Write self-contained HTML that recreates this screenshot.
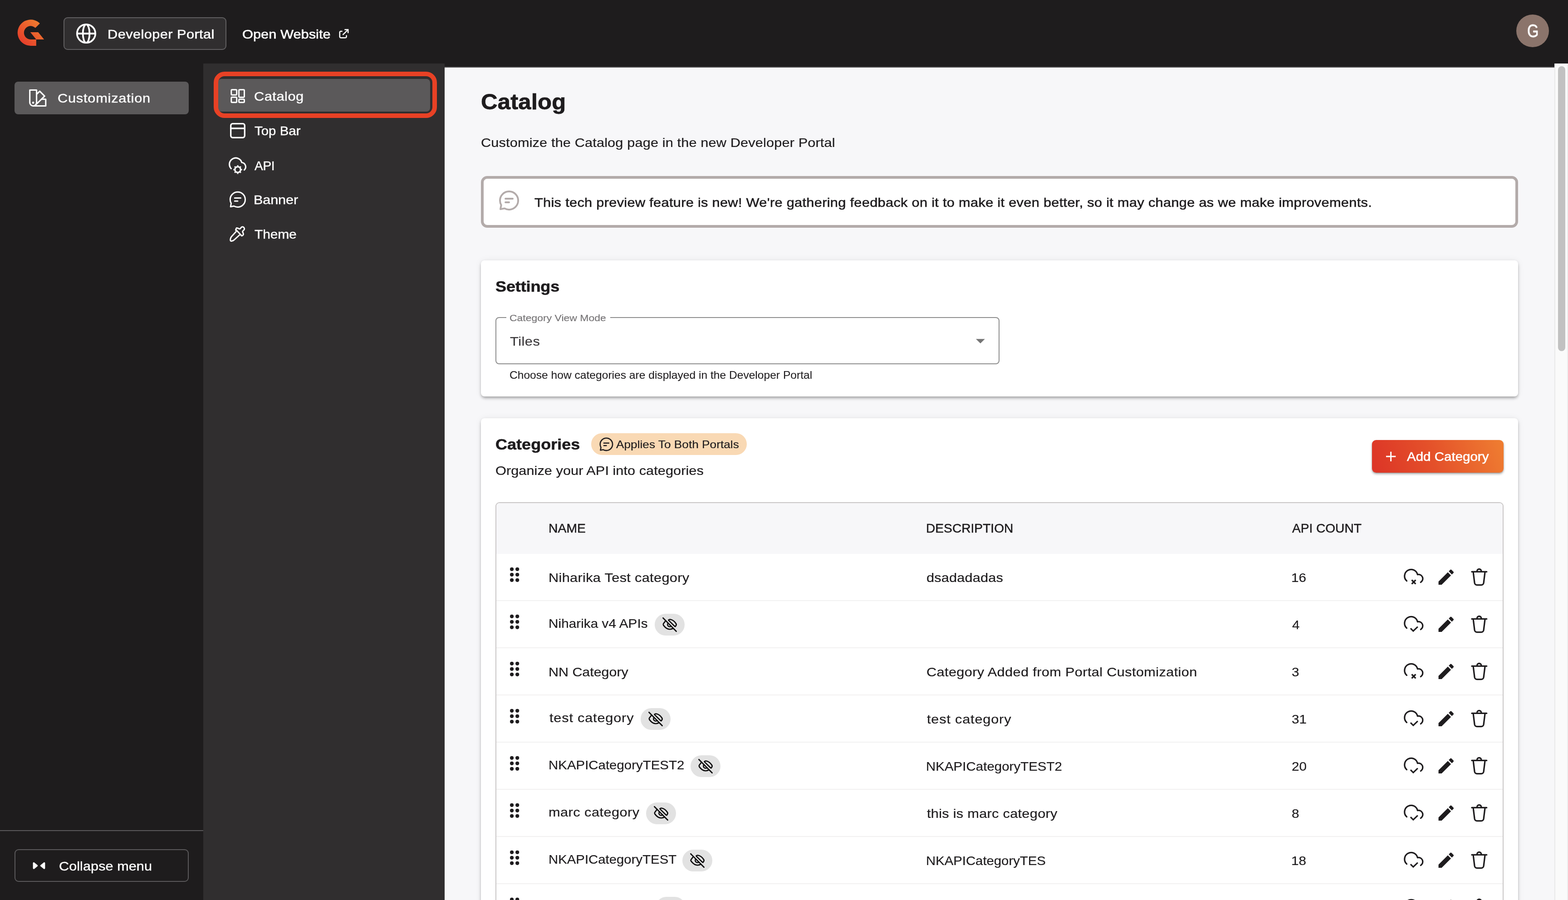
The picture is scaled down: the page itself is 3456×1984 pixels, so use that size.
<!DOCTYPE html>
<html lang="en">
<head>
<meta charset="utf-8">
<title>Catalog - Developer Portal Customization</title>
<style>
*{box-sizing:border-box;margin:0;padding:0}
html,body{width:3456px;height:1984px;overflow:hidden;background:#f7f7f9;font-family:"Liberation Sans", sans-serif;}
#app{position:relative;width:3456px;height:1984px;overflow:hidden;background:#f7f7f9;}
.abs,.t,svg{position:absolute}
.t{white-space:pre;display:block;transform-origin:0 0;font-weight:400;will-change:transform}
svg{overflow:visible}
header{position:absolute;left:0;top:0;width:3456px;height:149px;background:#1e1c1d;border-bottom:2px solid #545254;}
.side1{position:absolute;left:0;top:140px;width:448px;height:1844px;background:#1e1c1d;}
.side2{position:absolute;left:448px;top:140px;width:532px;height:1844px;background:#302e2f;}
.card{position:absolute;background:#fff;border-radius:8px;box-shadow:0 5px 7px -2px rgba(0,0,0,.30),0 2px 6px rgba(0,0,0,.10),0 0 16px rgba(0,0,0,.06);}
</style>
</head>
<body>
<div id="app">
<header>
<svg style="left:36px;top:40px" width="64" height="64" viewBox="36 40 64 64" ><defs><linearGradient id="lg" x1="45" y1="98" x2="92" y2="48" gradientUnits="userSpaceOnUse"><stop offset="0" stop-color="#e5392a"/><stop offset="1" stop-color="#ef8030"/></linearGradient></defs><path fill="url(#lg)" d="M87.85 51.65 A28.8 28.8 0 1 0 67.7 100.9 L79.8 100.9 L79.8 86.9 L67.7 86.9 A14.8 14.8 0 1 1 77.95 61.55 Z"/><path fill="url(#lg)" d="M66.8 71 L84.2 71 L97.2 86.9 L79.8 86.9 Z"/></svg>
<div class="abs" style="left:140px;top:38px;width:359px;height:72px;border:2px solid #605e60;border-radius:9px;background:#302e2f"></div>
<svg style="left:166px;top:50px" width="48" height="48" viewBox="166 50 48 48" ><circle cx="190" cy="74" r="20.2" fill="none" stroke="#fff" stroke-width="3.8" stroke-linecap="round" stroke-linejoin="round"/><ellipse cx="190" cy="74" rx="7.4" ry="20.2" fill="none" stroke="#fff" stroke-width="3.8" stroke-linecap="round" stroke-linejoin="round"/><path d="M170 74 H210" fill="none" stroke="#fff" stroke-width="3.8" stroke-linecap="round" stroke-linejoin="round"/></svg>
<span class="t" style="left:237.00px;top:61.80px;font-size:28px;line-height:28px;font-weight:400;color:#ffffff;letter-spacing:0.364px;transform:scaleX(1.1);-webkit-text-stroke:0.5px #ffffff;">Developer Portal</span>
<span class="t" style="left:534.00px;top:61.50px;font-size:28px;line-height:28px;font-weight:400;color:#ffffff;letter-spacing:0.000px;transform:scaleX(1.1);-webkit-text-stroke:0.6px #ffffff;">Open Website</span>
<svg style="left:746px;top:62px" width="24" height="24" viewBox="746 62 24 24" ><path d="M753.6 69 H751.3 A2.5 2.5 0 0 0 748.8 71.5 V80.8 A2.5 2.5 0 0 0 751.3 83.3 H761.1 A2.5 2.5 0 0 0 763.6 80.8 V78.5" fill="none" stroke="#fff" stroke-width="2.5" stroke-linecap="round" stroke-linejoin="round"/><path d="M756.2 76.2 L767.2 65.2 M760.4 65.2 H767.2 V72" fill="none" stroke="#fff" stroke-width="2.5" stroke-linecap="round" stroke-linejoin="round"/></svg>
<div class="abs" style="left:3342px;top:32px;width:72px;height:72px;border-radius:50%;background:#8b746b"></div>
<span class="t" style="left:3365.70px;top:48.09px;font-size:41px;line-height:41px;font-weight:400;color:#ffffff;letter-spacing:0.000px;transform:scaleX(0.8);-webkit-text-stroke:0.8px #ffffff;">G</span>
</header>
<nav class="side1">
<div class="abs" style="left:32px;top:40px;width:384px;height:72px;border-radius:8px;background:#5b595a"></div>
<div class="abs" style="left:0;top:1690px;width:448px;height:2px;background:#5a585a"></div>
<div class="abs" style="left:32px;top:1732px;width:384px;height:72px;border-radius:9px;border:2px solid #5a585a"></div>
</nav>
<svg style="left:62px;top:195px" width="42" height="42" viewBox="62 195 42 42" ><path d="M65.7 198.5 H80.6 V226 A7.45 7.45 0 0 1 65.7 226 Z" fill="none" stroke="#fff" stroke-width="3.1" stroke-linecap="round" stroke-linejoin="round"/><circle cx="73.1" cy="226.4" r="2.4" fill="#fff"/><path d="M80.9 207.5 L87.6 201.2 L98.3 211.8 L78.3 231.5" fill="none" stroke="#fff" stroke-width="3.1" stroke-linecap="round" stroke-linejoin="round"/><path d="M91.8 218.8 H100.8 V233.5 H73.5" fill="none" stroke="#fff" stroke-width="3.1" stroke-linecap="round" stroke-linejoin="round"/></svg>
<span class="t" style="left:127.00px;top:203.30px;font-size:28px;line-height:28px;font-weight:400;color:#ffffff;letter-spacing:0.682px;transform:scaleX(1.1);-webkit-text-stroke:0.4px #ffffff;">Customization</span>
<svg style="left:70px;top:1896px" width="32" height="24" viewBox="70 1896 32 24" ><path d="M74.4 1902.6 V1914 L81.4 1908.3 Z" fill="#fff" stroke="#fff" stroke-width="3.6" stroke-linejoin="round"/><path d="M97.6 1902.6 V1914 L90.6 1908.3 Z" fill="#fff" stroke="#fff" stroke-width="3.6" stroke-linejoin="round"/></svg>
<span class="t" style="left:129.50px;top:1895.60px;font-size:28px;line-height:28px;font-weight:400;color:#ffffff;letter-spacing:0.038px;transform:scaleX(1.0946);-webkit-text-stroke:0.4px #ffffff;">Collapse menu</span>
<nav class="side2">
<div class="abs" style="left:32px;top:34px;width:468px;height:72px;border-radius:8px;background:#5b595a"></div>
<div class="abs" style="left:23px;top:18px;width:492px;height:102px;border-radius:24px;border:10px solid #e84125"></div>
</nav>
<svg style="left:506px;top:194px" width="36" height="36" viewBox="506 194 36 36" ><rect x="509.8" y="197.8" width="11.9" height="11.4" rx="1.8" fill="none" stroke="#fff" stroke-width="3.0" stroke-linecap="round" stroke-linejoin="round"/><rect x="526.6" y="197.8" width="11.9" height="16.6" rx="1.8" fill="none" stroke="#fff" stroke-width="3.0" stroke-linecap="round" stroke-linejoin="round"/><rect x="509.8" y="214.3" width="11.9" height="11.4" rx="1.8" fill="none" stroke="#fff" stroke-width="3.0" stroke-linecap="round" stroke-linejoin="round"/><rect x="526.6" y="218.7" width="11.9" height="7" rx="1.8" fill="none" stroke="#fff" stroke-width="3.0" stroke-linecap="round" stroke-linejoin="round"/></svg>
<svg style="left:505px;top:269px" width="38" height="38" viewBox="505 269 38 38" ><rect x="508.7" y="272.7" width="30.6" height="30.6" rx="4" fill="none" stroke="#fff" stroke-width="3.3" stroke-linecap="round" stroke-linejoin="round"/><path d="M508.7 283 H539.3" fill="none" stroke="#fff" stroke-width="3.3" stroke-linecap="round" stroke-linejoin="round"/></svg>
<svg style="left:500px;top:343px" width="48" height="44" viewBox="500 343 48 44" ><path d="M509.4 371.6 A13.9 13.9 0 1 1 532.9 358.2 A9.5 9.5 0 0 1 538.4 374.6" fill="none" stroke="#fff" stroke-width="3.1" stroke-linecap="round" stroke-linejoin="round"/><path d="M531.60 373.90 L533.70 373.90 M529.37 379.27 L530.86 380.76 M524.00 381.50 L524.00 383.60 M518.63 379.27 L517.14 380.76 M516.40 373.90 L514.30 373.90 M518.63 368.53 L517.14 367.04 M524.00 366.30 L524.00 364.20 M529.37 368.53 L530.86 367.04 " fill="none" stroke="#fff" stroke-width="3.0" stroke-linecap="butt"/><circle cx="524" cy="373.9" r="6.3" fill="none" stroke="#fff" stroke-width="3.3"/></svg>
<svg style="left:502.18px;top:417.88px" width="43.84" height="43.84" viewBox="502.18 417.88 43.84 43.84" ><path d="M524.10 456.40 C533.27 456.40 540.70 448.97 540.70 439.80 C540.70 430.63 533.27 423.20 524.10 423.20 C514.93 423.20 507.50 430.63 507.50 439.80 C507.50 442.82 508.31 445.66 509.72 448.10 L508.33 455.57 L515.80 454.18 C518.24 455.59 521.08 456.40 524.10 456.40 Z" fill="none" stroke="#fff" stroke-width="3.0" stroke-linecap="round" stroke-linejoin="round"/><path d="M517.46 436.48 L530.74 436.48 M517.46 443.12 L524.10 443.12" fill="none" stroke="#fff" stroke-width="3.0" stroke-linecap="round" stroke-linejoin="round"/></svg>
<svg style="left:502px;top:494px" width="44" height="44" viewBox="502 494 44 44" ><path d="M520.3 510.5 L509.9 522 C508.4 523.8 507.3 528 507.9 530.3 C508.1 530.9 508.6 531.4 509.3 531.5 C511.8 531.8 514.8 530.2 516.6 528.4 L527.7 518.3" fill="none" stroke="#fff" stroke-width="2.9" stroke-linecap="round" stroke-linejoin="round"/><path d="M519.50 507.40 C519.80 506.60 520.17 503.18 521.30 502.60 C522.43 502.02 525.02 503.58 526.30 503.90 C527.58 504.22 528.00 505.02 529.00 504.50 C530.00 503.98 531.20 501.52 532.30 500.80 C533.40 500.08 534.58 499.83 535.60 500.20 C536.62 500.57 537.97 502.02 538.40 503.00 C538.83 503.98 538.82 504.90 538.20 506.10 C537.58 507.30 535.13 509.03 534.70 510.20 C534.27 511.37 535.32 511.97 535.60 513.10 C535.88 514.23 536.82 515.87 536.40 517.00 C535.98 518.13 533.97 519.62 533.10 519.90 C532.23 520.18 531.52 518.90 531.20 518.70 " fill="none" stroke="#fff" stroke-width="2.9" stroke-linecap="round" stroke-linejoin="round"/><path d="M520.2 506.6 L532 518.9" fill="none" stroke="#fff" stroke-width="2.9" stroke-linecap="round" stroke-linejoin="round"/></svg>
<span class="t" style="left:559.50px;top:199.10px;font-size:28px;line-height:28px;font-weight:400;color:#ffffff;letter-spacing:0.455px;transform:scaleX(1.1);-webkit-text-stroke:0.4px #ffffff;">Catalog</span>
<span class="t" style="left:560.50px;top:275.10px;font-size:28px;line-height:28px;font-weight:400;color:#ffffff;letter-spacing:0.080px;transform:scaleX(1.0464);-webkit-text-stroke:0.4px #ffffff;">Top Bar</span>
<span class="t" style="left:560.50px;top:351.50px;font-size:28px;line-height:28px;font-weight:400;color:#ffffff;letter-spacing:-0.300px;-webkit-text-stroke:0.4px #ffffff;">API</span>
<span class="t" style="left:558.50px;top:427.30px;font-size:28px;line-height:28px;font-weight:400;color:#ffffff;letter-spacing:-0.128px;transform:scaleX(1.0943);-webkit-text-stroke:0.4px #ffffff;">Banner</span>
<span class="t" style="left:560.50px;top:503.10px;font-size:28px;line-height:28px;font-weight:400;color:#ffffff;letter-spacing:-0.163px;transform:scaleX(1.0733);-webkit-text-stroke:0.4px #ffffff;">Theme</span>
<main>
<h1 class="t" style="left:1060.20px;top:201.07px;font-size:48px;line-height:48px;font-weight:700;color:#1e1c1e;letter-spacing:0.158px;transform:scaleX(1.0578);-webkit-text-stroke:0.8px #1e1c1e;">Catalog</h1>
<p class="t" style="left:1059.50px;top:301.30px;font-size:28px;line-height:28px;font-weight:400;color:#1e1c1e;letter-spacing:0.086px;transform:scaleX(1.1);-webkit-text-stroke:0.2px #1e1c1e;">Customize the Catalog page in the new Developer Portal</p>
<div class="abs" style="left:1060px;top:388px;width:2286px;height:114px;border:6px solid #b3abaa;border-radius:14px;background:#fff"></div>
<svg style="left:1095.84px;top:415.84px" width="52.12" height="52.12" viewBox="1095.84 415.84 52.12 52.12" ><path d="M1121.90 461.95 C1132.97 461.95 1141.95 452.97 1141.95 441.90 C1141.95 430.83 1132.97 421.85 1121.90 421.85 C1110.83 421.85 1101.85 430.83 1101.85 441.90 C1101.85 445.55 1102.83 448.98 1104.53 451.92 L1102.85 460.95 L1111.88 459.27 C1114.82 460.97 1118.25 461.95 1121.90 461.95 Z" fill="none" stroke="#b3abaa" stroke-width="3.9" stroke-linecap="round" stroke-linejoin="round"/><path d="M1113.88 437.89 L1129.92 437.89 M1113.88 445.91 L1121.90 445.91" fill="none" stroke="#b3abaa" stroke-width="3.9" stroke-linecap="round" stroke-linejoin="round"/></svg>
<p class="t" style="left:1178.00px;top:432.55px;font-size:28px;line-height:28px;font-weight:400;color:#1e1c1e;letter-spacing:0.254px;transform:scaleX(1.1);-webkit-text-stroke:0.55px #1e1c1e;">This tech preview feature is new! We're gathering feedback on it to make it even better, so it may change as we make improvements.</p>
<section class="card" style="left:1060px;top:574px;width:2286px;height:300px"></section>
<h2 class="t" style="left:1091.50px;top:614.64px;font-size:33.5px;line-height:33.5px;font-weight:700;color:#1e1c1e;letter-spacing:-0.133px;transform:scaleX(1.0769);-webkit-text-stroke:0.6px #1e1c1e;">Settings</h2>
<div class="abs" style="left:1092px;top:699px;width:1111px;height:104px;border:2px solid #8e8e8e;border-radius:8px"></div>
<div class="abs" style="left:1116px;top:696px;width:229px;height:8px;background:#fff"></div>
<label class="t" style="left:1123.00px;top:690.22px;font-size:21px;line-height:21px;font-weight:400;color:#777577;letter-spacing:0.000px;transform:scaleX(1.0933);-webkit-text-stroke:0.2px #777577;">Category View Mode</label>
<span class="t" style="left:1124.00px;top:739.00px;font-size:28px;line-height:28px;font-weight:400;color:#3b393b;letter-spacing:0.455px;transform:scaleX(1.1);-webkit-text-stroke:0.2px #3b393b;">Tiles</span>
<svg style="left:2148px;top:744px" width="26" height="16" viewBox="2148 744 26 16" ><path d="M2151 747.2 H2170.8 L2160.9 757 Z" fill="#757575"/></svg>
<p class="t" style="left:1123.00px;top:815.18px;font-size:24px;line-height:24px;font-weight:400;color:#1e1c1e;letter-spacing:0.000px;transform:scaleX(1.0247);-webkit-text-stroke:0.1px #1e1c1e;">Choose how categories are displayed in the Developer Portal</p>
<section class="card" style="left:1060px;top:922px;width:2286px;height:1200px"></section>
<h2 class="t" style="left:1091.50px;top:962.64px;font-size:33.5px;line-height:33.5px;font-weight:700;color:#1e1c1e;letter-spacing:0.000px;transform:scaleX(1.076);-webkit-text-stroke:0.6px #1e1c1e;">Categories</h2>
<div class="abs" style="left:1303px;top:955px;width:343px;height:48px;border-radius:24px;background:#f9d9b4"></div>
<svg style="left:1317.56px;top:960.56px" width="36.88" height="36.88" viewBox="1317.56 960.56 36.88 36.88" ><path d="M1336.00 992.70 C1343.57 992.70 1349.70 986.57 1349.70 979.00 C1349.70 971.43 1343.57 965.30 1336.00 965.30 C1328.43 965.30 1322.30 971.43 1322.30 979.00 C1322.30 981.50 1322.97 983.83 1324.13 985.85 L1322.98 992.01 L1329.15 990.87 C1331.17 992.03 1333.50 992.70 1336.00 992.70 Z" fill="none" stroke="#1e1c1e" stroke-width="2.6" stroke-linecap="round" stroke-linejoin="round"/><path d="M1330.52 976.26 L1341.48 976.26 M1330.52 981.74 L1336.00 981.74" fill="none" stroke="#1e1c1e" stroke-width="2.6" stroke-linecap="round" stroke-linejoin="round"/></svg>
<span class="t" style="left:1358.00px;top:967.68px;font-size:24px;line-height:24px;font-weight:400;color:#1e1c1e;letter-spacing:0.000px;transform:scaleX(1.0931);-webkit-text-stroke:0.2px #1e1c1e;">Applies To Both Portals</span>
<p class="t" style="left:1091.50px;top:1024.30px;font-size:28px;line-height:28px;font-weight:400;color:#1e1c1e;letter-spacing:0.000px;transform:scaleX(1.1);-webkit-text-stroke:0.2px #1e1c1e;">Organize your API into categories</p>
<div class="abs" style="left:3024px;top:970px;width:290px;height:72px;border-radius:9px;background:linear-gradient(70deg,#dc3427 0%,#e4502a 45%,#ef7e31 100%);box-shadow:0 3px 5px rgba(0,0,0,.3),0 1px 2px rgba(0,0,0,.2)"></div>
<svg style="left:3052px;top:993px" width="28" height="28" viewBox="3052 993 28 28" ><path d="M3055 1006.3 H3076.3 M3065.65 995.7 V1017" fill="none" stroke="#fff" stroke-width="3.0" stroke-linecap="butt" stroke-linejoin="round"/></svg>
<span class="t" style="left:3100.60px;top:993.94px;font-size:27px;line-height:27px;font-weight:400;color:#ffffff;letter-spacing:0.058px;transform:scaleX(1.0886);-webkit-text-stroke:0.6px #ffffff;">Add Category</span>
<div class="abs" style="left:1092px;top:1107px;width:2222px;height:1000px;border:2px solid #c9c6c6;border-radius:9px;background:#fff;overflow:hidden">
<div class="abs" style="left:0;top:0;width:2222px;height:112px;background:#f7f7f9"></div>
<div class="abs" style="left:0;top:214px;width:2222px;height:2px;background:#f2f1f1"></div>
<div class="abs" style="left:0;top:318px;width:2222px;height:2px;background:#f2f1f1"></div>
<div class="abs" style="left:0;top:422px;width:2222px;height:2px;background:#f2f1f1"></div>
<div class="abs" style="left:0;top:526px;width:2222px;height:2px;background:#f2f1f1"></div>
<div class="abs" style="left:0;top:630px;width:2222px;height:2px;background:#f2f1f1"></div>
<div class="abs" style="left:0;top:734px;width:2222px;height:2px;background:#f2f1f1"></div>
<div class="abs" style="left:0;top:838px;width:2222px;height:2px;background:#f2f1f1"></div>
<div class="abs" style="left:0;top:942px;width:2222px;height:2px;background:#f2f1f1"></div>
</div>
<span class="t" style="left:1208.75px;top:1151.30px;font-size:28px;line-height:28px;font-weight:400;color:#1e1c1e;letter-spacing:0.000px;transform:scaleX(1.0128);-webkit-text-stroke:0.5px #1e1c1e;">NAME</span>
<span class="t" style="left:2041.00px;top:1151.30px;font-size:28px;line-height:28px;font-weight:400;color:#1e1c1e;letter-spacing:0.000px;transform:scaleX(1.0053);-webkit-text-stroke:0.5px #1e1c1e;">DESCRIPTION</span>
<span class="t" style="left:2848.00px;top:1151.30px;font-size:28px;line-height:28px;font-weight:400;color:#1e1c1e;letter-spacing:-0.037px;transform:scaleX(1.0046);-webkit-text-stroke:0.5px #1e1c1e;">API COUNT</span>
<svg style="left:1122px;top:1249px" width="24" height="36" viewBox="1122 1249 24 36" ><circle cx="1128.1" cy="1254.8" r="4.1" fill="#1e1c1e"/><circle cx="1128.1" cy="1266.8" r="4.1" fill="#1e1c1e"/><circle cx="1128.1" cy="1278.8" r="4.1" fill="#1e1c1e"/><circle cx="1140.2" cy="1254.8" r="4.1" fill="#1e1c1e"/><circle cx="1140.2" cy="1266.8" r="4.1" fill="#1e1c1e"/><circle cx="1140.2" cy="1278.8" r="4.1" fill="#1e1c1e"/></svg>
<span class="t" style="left:1209.00px;top:1260.10px;font-size:28px;line-height:28px;font-weight:400;color:#1e1c1e;letter-spacing:0.260px;transform:scaleX(1.1);-webkit-text-stroke:0.2px #1e1c1e;">Niharika Test category</span>
<span class="t" style="left:2042.00px;top:1260.10px;font-size:28px;line-height:28px;font-weight:400;color:#1e1c1e;letter-spacing:0.101px;transform:scaleX(1.1);-webkit-text-stroke:0.2px #1e1c1e;">dsadadadas</span>
<span class="t" style="left:2846.00px;top:1260.10px;font-size:28px;line-height:28px;font-weight:400;color:#1e1c1e;letter-spacing:0.000px;transform:scaleX(1.06);-webkit-text-stroke:0.2px #1e1c1e;">16</span>
<svg style="left:3092px;top:1251px" width="48" height="44" viewBox="3092 1251 48 44" ><path d="M3100.5 1280.6 A14.5 14.5 0 1 1 3124.4 1266.6 A9.3 9.3 0 0 1 3131.4 1283.6" fill="none" stroke="#1e1c1e" stroke-width="3.3" stroke-linecap="round" stroke-linejoin="round"/><path d="M3111.5 1278.5 L3120.3 1287.3000000000002 M3120.3 1278.5 L3111.5 1287.3000000000002" fill="none" stroke="#1e1c1e" stroke-width="3.3" stroke-linecap="butt" stroke-linejoin="round"/></svg>
<svg style="left:3165.4px;top:1249.6px" width="44.64" height="44.64" viewBox="0 0 24 24"><path d="M3 17.25V21h3.75L17.81 9.94l-3.75-3.75L3 17.25zM20.71 7.04c.39-.39.39-1.02 0-1.41l-2.34-2.34c-.39-.39-1.02-.39-1.41 0l-1.83 1.83 3.75 3.75 1.83-1.83z" fill="#1e1c1e"/></svg>
<svg style="left:3240px;top:1249px" width="42" height="46" viewBox="3240 1249 42 46" ><path d="M3244 1260.4 H3276.7" fill="none" stroke="#1e1c1e" stroke-width="3.3" stroke-linecap="round" stroke-linejoin="round"/><path d="M3255.6 1260 V1258.6 A4.6 4.1 0 0 1 3264.8 1258.6 V1260" fill="none" stroke="#1e1c1e" stroke-width="3.3" stroke-linecap="round" stroke-linejoin="round"/><path d="M3247.2 1261.5 L3250 1284.3 A5.6 5.6 0 0 0 3255.6 1289.7 H3264.6 A5.6 5.6 0 0 0 3270.2 1284.3 L3273 1261.5" fill="none" stroke="#1e1c1e" stroke-width="3.3" stroke-linecap="round" stroke-linejoin="round"/></svg>
<svg style="left:1122px;top:1353px" width="24" height="36" viewBox="1122 1353 24 36" ><circle cx="1128.1" cy="1358.8" r="4.1" fill="#1e1c1e"/><circle cx="1128.1" cy="1370.8" r="4.1" fill="#1e1c1e"/><circle cx="1128.1" cy="1382.8" r="4.1" fill="#1e1c1e"/><circle cx="1140.2" cy="1358.8" r="4.1" fill="#1e1c1e"/><circle cx="1140.2" cy="1370.8" r="4.1" fill="#1e1c1e"/><circle cx="1140.2" cy="1382.8" r="4.1" fill="#1e1c1e"/></svg>
<span class="t" style="left:1209.00px;top:1360.90px;font-size:28px;line-height:28px;font-weight:400;color:#1e1c1e;letter-spacing:0.031px;transform:scaleX(1.0616);-webkit-text-stroke:0.2px #1e1c1e;">Niharika v4 APIs</span>
<div class="abs" style="left:1443px;top:1353px;width:66px;height:48px;border-radius:24px;background:#e2e2e2"></div>
<svg style="left:1458px;top:1359px" width="36" height="36" viewBox="1458 1359 36 36" ><path d="M1470.40 1368.40 L1486.40 1384.40" fill="none" stroke="#f4f4f4" stroke-width="1.3"/><path d="M1473.60 1366.60 C1474.50 1365.70 1476.00 1365.40 1477.00 1365.50 C1482.00 1366.00 1486.60 1369.50 1490.00 1374.80 C1490.90 1376.30 1490.70 1378.00 1489.80 1379.20 L1488.90 1380.50 C1488.60 1381.40 1487.80 1381.40 1487.20 1380.80 L1473.60 1367.40 C1473.30 1367.10 1473.30 1366.90 1473.60 1366.60 Z" fill="none" stroke="#0c0b0c" stroke-width="2.65" stroke-linecap="round" stroke-linejoin="round"/><path d="M1467.20 1368.20 L1462.30 1374.80 C1461.40 1376.00 1461.40 1377.00 1462.20 1378.10 C1465.50 1382.80 1470.50 1387.20 1476.30 1387.20 C1479.40 1387.20 1481.80 1386.20 1484.00 1385.00" fill="none" stroke="#0c0b0c" stroke-width="2.65" stroke-linecap="round" stroke-linejoin="round"/><path d="M1472.50 1373.50 A4.9 4.9 0 0 0 1479.40 1380.40" fill="none" stroke="#0c0b0c" stroke-width="2.65" stroke-linecap="round" stroke-linejoin="round"/><path d="M1461.40 1362.20 L1490.60 1391.75" fill="none" stroke="#0c0b0c" stroke-width="2.65" stroke-linecap="round" stroke-linejoin="round"/></svg>
<span class="t" style="left:2848.00px;top:1364.10px;font-size:28px;line-height:28px;font-weight:400;color:#1e1c1e;letter-spacing:0.000px;transform:scaleX(1.06);-webkit-text-stroke:0.2px #1e1c1e;">4</span>
<svg style="left:3092px;top:1355px" width="48" height="44" viewBox="3092 1355 48 44" ><path d="M3100.5 1384.6 A14.5 14.5 0 1 1 3124.4 1370.6 A9.3 9.3 0 0 1 3131.4 1387.6" fill="none" stroke="#1e1c1e" stroke-width="3.3" stroke-linecap="round" stroke-linejoin="round"/><path d="M3108.9 1385.2 L3114.9 1391.1 L3124.8 1381.6" fill="none" stroke="#1e1c1e" stroke-width="3.2" stroke-linecap="butt" stroke-linejoin="miter"/></svg>
<svg style="left:3165.4px;top:1353.6px" width="44.64" height="44.64" viewBox="0 0 24 24"><path d="M3 17.25V21h3.75L17.81 9.94l-3.75-3.75L3 17.25zM20.71 7.04c.39-.39.39-1.02 0-1.41l-2.34-2.34c-.39-.39-1.02-.39-1.41 0l-1.83 1.83 3.75 3.75 1.83-1.83z" fill="#1e1c1e"/></svg>
<svg style="left:3240px;top:1353px" width="42" height="46" viewBox="3240 1353 42 46" ><path d="M3244 1364.4 H3276.7" fill="none" stroke="#1e1c1e" stroke-width="3.3" stroke-linecap="round" stroke-linejoin="round"/><path d="M3255.6 1364 V1362.6 A4.6 4.1 0 0 1 3264.8 1362.6 V1364" fill="none" stroke="#1e1c1e" stroke-width="3.3" stroke-linecap="round" stroke-linejoin="round"/><path d="M3247.2 1365.5 L3250 1388.3 A5.6 5.6 0 0 0 3255.6 1393.7 H3264.6 A5.6 5.6 0 0 0 3270.2 1388.3 L3273 1365.5" fill="none" stroke="#1e1c1e" stroke-width="3.3" stroke-linecap="round" stroke-linejoin="round"/></svg>
<svg style="left:1122px;top:1457px" width="24" height="36" viewBox="1122 1457 24 36" ><circle cx="1128.1" cy="1462.8" r="4.1" fill="#1e1c1e"/><circle cx="1128.1" cy="1474.8" r="4.1" fill="#1e1c1e"/><circle cx="1128.1" cy="1486.8" r="4.1" fill="#1e1c1e"/><circle cx="1140.2" cy="1462.8" r="4.1" fill="#1e1c1e"/><circle cx="1140.2" cy="1474.8" r="4.1" fill="#1e1c1e"/><circle cx="1140.2" cy="1486.8" r="4.1" fill="#1e1c1e"/></svg>
<span class="t" style="left:1209.00px;top:1468.10px;font-size:28px;line-height:28px;font-weight:400;color:#1e1c1e;letter-spacing:-0.055px;transform:scaleX(1.09);-webkit-text-stroke:0.2px #1e1c1e;">NN Category</span>
<span class="t" style="left:2042.00px;top:1468.10px;font-size:28px;line-height:28px;font-weight:400;color:#1e1c1e;letter-spacing:0.291px;transform:scaleX(1.1);-webkit-text-stroke:0.2px #1e1c1e;">Category Added from Portal Customization</span>
<span class="t" style="left:2847.00px;top:1468.10px;font-size:28px;line-height:28px;font-weight:400;color:#1e1c1e;letter-spacing:0.000px;transform:scaleX(1.06);-webkit-text-stroke:0.2px #1e1c1e;">3</span>
<svg style="left:3092px;top:1459px" width="48" height="44" viewBox="3092 1459 48 44" ><path d="M3100.5 1488.6 A14.5 14.5 0 1 1 3124.4 1474.6 A9.3 9.3 0 0 1 3131.4 1491.6" fill="none" stroke="#1e1c1e" stroke-width="3.3" stroke-linecap="round" stroke-linejoin="round"/><path d="M3111.5 1486.5 L3120.3 1495.3000000000002 M3120.3 1486.5 L3111.5 1495.3000000000002" fill="none" stroke="#1e1c1e" stroke-width="3.3" stroke-linecap="butt" stroke-linejoin="round"/></svg>
<svg style="left:3165.4px;top:1457.6px" width="44.64" height="44.64" viewBox="0 0 24 24"><path d="M3 17.25V21h3.75L17.81 9.94l-3.75-3.75L3 17.25zM20.71 7.04c.39-.39.39-1.02 0-1.41l-2.34-2.34c-.39-.39-1.02-.39-1.41 0l-1.83 1.83 3.75 3.75 1.83-1.83z" fill="#1e1c1e"/></svg>
<svg style="left:3240px;top:1457px" width="42" height="46" viewBox="3240 1457 42 46" ><path d="M3244 1468.4 H3276.7" fill="none" stroke="#1e1c1e" stroke-width="3.3" stroke-linecap="round" stroke-linejoin="round"/><path d="M3255.6 1468 V1466.6 A4.6 4.1 0 0 1 3264.8 1466.6 V1468" fill="none" stroke="#1e1c1e" stroke-width="3.3" stroke-linecap="round" stroke-linejoin="round"/><path d="M3247.2 1469.5 L3250 1492.3 A5.6 5.6 0 0 0 3255.6 1497.7 H3264.6 A5.6 5.6 0 0 0 3270.2 1492.3 L3273 1469.5" fill="none" stroke="#1e1c1e" stroke-width="3.3" stroke-linecap="round" stroke-linejoin="round"/></svg>
<svg style="left:1122px;top:1561px" width="24" height="36" viewBox="1122 1561 24 36" ><circle cx="1128.1" cy="1566.8" r="4.1" fill="#1e1c1e"/><circle cx="1128.1" cy="1578.8" r="4.1" fill="#1e1c1e"/><circle cx="1128.1" cy="1590.8" r="4.1" fill="#1e1c1e"/><circle cx="1140.2" cy="1566.8" r="4.1" fill="#1e1c1e"/><circle cx="1140.2" cy="1578.8" r="4.1" fill="#1e1c1e"/><circle cx="1140.2" cy="1590.8" r="4.1" fill="#1e1c1e"/></svg>
<span class="t" style="left:1211.00px;top:1568.90px;font-size:28px;line-height:28px;font-weight:400;color:#1e1c1e;letter-spacing:0.697px;transform:scaleX(1.1);-webkit-text-stroke:0.2px #1e1c1e;">test category</span>
<div class="abs" style="left:1411.6px;top:1561px;width:66px;height:48px;border-radius:24px;background:#e2e2e2"></div>
<svg style="left:1426.6px;top:1567px" width="36" height="36" viewBox="1426.6 1567 36 36" ><path d="M1439.00 1576.40 L1455.00 1592.40" fill="none" stroke="#f4f4f4" stroke-width="1.3"/><path d="M1442.20 1574.60 C1443.10 1573.70 1444.60 1573.40 1445.60 1573.50 C1450.60 1574.00 1455.20 1577.50 1458.60 1582.80 C1459.50 1584.30 1459.30 1586.00 1458.40 1587.20 L1457.50 1588.50 C1457.20 1589.40 1456.40 1589.40 1455.80 1588.80 L1442.20 1575.40 C1441.90 1575.10 1441.90 1574.90 1442.20 1574.60 Z" fill="none" stroke="#0c0b0c" stroke-width="2.65" stroke-linecap="round" stroke-linejoin="round"/><path d="M1435.80 1576.20 L1430.90 1582.80 C1430.00 1584.00 1430.00 1585.00 1430.80 1586.10 C1434.10 1590.80 1439.10 1595.20 1444.90 1595.20 C1448.00 1595.20 1450.40 1594.20 1452.60 1593.00" fill="none" stroke="#0c0b0c" stroke-width="2.65" stroke-linecap="round" stroke-linejoin="round"/><path d="M1441.10 1581.50 A4.9 4.9 0 0 0 1448.00 1588.40" fill="none" stroke="#0c0b0c" stroke-width="2.65" stroke-linecap="round" stroke-linejoin="round"/><path d="M1430.00 1570.20 L1459.20 1599.75" fill="none" stroke="#0c0b0c" stroke-width="2.65" stroke-linecap="round" stroke-linejoin="round"/></svg>
<span class="t" style="left:2043.00px;top:1572.10px;font-size:28px;line-height:28px;font-weight:400;color:#1e1c1e;letter-spacing:0.697px;transform:scaleX(1.1);-webkit-text-stroke:0.2px #1e1c1e;">test category</span>
<span class="t" style="left:2847.00px;top:1572.10px;font-size:28px;line-height:28px;font-weight:400;color:#1e1c1e;letter-spacing:0.000px;transform:scaleX(1.06);-webkit-text-stroke:0.2px #1e1c1e;">31</span>
<svg style="left:3092px;top:1563px" width="48" height="44" viewBox="3092 1563 48 44" ><path d="M3100.5 1592.6 A14.5 14.5 0 1 1 3124.4 1578.6 A9.3 9.3 0 0 1 3131.4 1595.6" fill="none" stroke="#1e1c1e" stroke-width="3.3" stroke-linecap="round" stroke-linejoin="round"/><path d="M3108.9 1593.2 L3114.9 1599.1 L3124.8 1589.6" fill="none" stroke="#1e1c1e" stroke-width="3.2" stroke-linecap="butt" stroke-linejoin="miter"/></svg>
<svg style="left:3165.4px;top:1561.6px" width="44.64" height="44.64" viewBox="0 0 24 24"><path d="M3 17.25V21h3.75L17.81 9.94l-3.75-3.75L3 17.25zM20.71 7.04c.39-.39.39-1.02 0-1.41l-2.34-2.34c-.39-.39-1.02-.39-1.41 0l-1.83 1.83 3.75 3.75 1.83-1.83z" fill="#1e1c1e"/></svg>
<svg style="left:3240px;top:1561px" width="42" height="46" viewBox="3240 1561 42 46" ><path d="M3244 1572.4 H3276.7" fill="none" stroke="#1e1c1e" stroke-width="3.3" stroke-linecap="round" stroke-linejoin="round"/><path d="M3255.6 1572 V1570.6 A4.6 4.1 0 0 1 3264.8 1570.6 V1572" fill="none" stroke="#1e1c1e" stroke-width="3.3" stroke-linecap="round" stroke-linejoin="round"/><path d="M3247.2 1573.5 L3250 1596.3 A5.6 5.6 0 0 0 3255.6 1601.7 H3264.6 A5.6 5.6 0 0 0 3270.2 1596.3 L3273 1573.5" fill="none" stroke="#1e1c1e" stroke-width="3.3" stroke-linecap="round" stroke-linejoin="round"/></svg>
<svg style="left:1122px;top:1665px" width="24" height="36" viewBox="1122 1665 24 36" ><circle cx="1128.1" cy="1670.8" r="4.1" fill="#1e1c1e"/><circle cx="1128.1" cy="1682.8" r="4.1" fill="#1e1c1e"/><circle cx="1128.1" cy="1694.8" r="4.1" fill="#1e1c1e"/><circle cx="1140.2" cy="1670.8" r="4.1" fill="#1e1c1e"/><circle cx="1140.2" cy="1682.8" r="4.1" fill="#1e1c1e"/><circle cx="1140.2" cy="1694.8" r="4.1" fill="#1e1c1e"/></svg>
<span class="t" style="left:1209.00px;top:1672.90px;font-size:28px;line-height:28px;font-weight:400;color:#1e1c1e;letter-spacing:-0.017px;transform:scaleX(1.0521);-webkit-text-stroke:0.2px #1e1c1e;">NKAPICategoryTEST2</span>
<div class="abs" style="left:1522px;top:1665px;width:66px;height:48px;border-radius:24px;background:#e2e2e2"></div>
<svg style="left:1537px;top:1671px" width="36" height="36" viewBox="1537 1671 36 36" ><path d="M1549.40 1680.40 L1565.40 1696.40" fill="none" stroke="#f4f4f4" stroke-width="1.3"/><path d="M1552.60 1678.60 C1553.50 1677.70 1555.00 1677.40 1556.00 1677.50 C1561.00 1678.00 1565.60 1681.50 1569.00 1686.80 C1569.90 1688.30 1569.70 1690.00 1568.80 1691.20 L1567.90 1692.50 C1567.60 1693.40 1566.80 1693.40 1566.20 1692.80 L1552.60 1679.40 C1552.30 1679.10 1552.30 1678.90 1552.60 1678.60 Z" fill="none" stroke="#0c0b0c" stroke-width="2.65" stroke-linecap="round" stroke-linejoin="round"/><path d="M1546.20 1680.20 L1541.30 1686.80 C1540.40 1688.00 1540.40 1689.00 1541.20 1690.10 C1544.50 1694.80 1549.50 1699.20 1555.30 1699.20 C1558.40 1699.20 1560.80 1698.20 1563.00 1697.00" fill="none" stroke="#0c0b0c" stroke-width="2.65" stroke-linecap="round" stroke-linejoin="round"/><path d="M1551.50 1685.50 A4.9 4.9 0 0 0 1558.40 1692.40" fill="none" stroke="#0c0b0c" stroke-width="2.65" stroke-linecap="round" stroke-linejoin="round"/><path d="M1540.40 1674.20 L1569.60 1703.75" fill="none" stroke="#0c0b0c" stroke-width="2.65" stroke-linecap="round" stroke-linejoin="round"/></svg>
<span class="t" style="left:2041.00px;top:1676.10px;font-size:28px;line-height:28px;font-weight:400;color:#1e1c1e;letter-spacing:0.028px;transform:scaleX(1.0514);-webkit-text-stroke:0.2px #1e1c1e;">NKAPICategoryTEST2</span>
<span class="t" style="left:2847.00px;top:1676.10px;font-size:28px;line-height:28px;font-weight:400;color:#1e1c1e;letter-spacing:0.000px;transform:scaleX(1.06);-webkit-text-stroke:0.2px #1e1c1e;">20</span>
<svg style="left:3092px;top:1667px" width="48" height="44" viewBox="3092 1667 48 44" ><path d="M3100.5 1696.6 A14.5 14.5 0 1 1 3124.4 1682.6 A9.3 9.3 0 0 1 3131.4 1699.6" fill="none" stroke="#1e1c1e" stroke-width="3.3" stroke-linecap="round" stroke-linejoin="round"/><path d="M3108.9 1697.2 L3114.9 1703.1 L3124.8 1693.6" fill="none" stroke="#1e1c1e" stroke-width="3.2" stroke-linecap="butt" stroke-linejoin="miter"/></svg>
<svg style="left:3165.4px;top:1665.6px" width="44.64" height="44.64" viewBox="0 0 24 24"><path d="M3 17.25V21h3.75L17.81 9.94l-3.75-3.75L3 17.25zM20.71 7.04c.39-.39.39-1.02 0-1.41l-2.34-2.34c-.39-.39-1.02-.39-1.41 0l-1.83 1.83 3.75 3.75 1.83-1.83z" fill="#1e1c1e"/></svg>
<svg style="left:3240px;top:1665px" width="42" height="46" viewBox="3240 1665 42 46" ><path d="M3244 1676.4 H3276.7" fill="none" stroke="#1e1c1e" stroke-width="3.3" stroke-linecap="round" stroke-linejoin="round"/><path d="M3255.6 1676 V1674.6 A4.6 4.1 0 0 1 3264.8 1674.6 V1676" fill="none" stroke="#1e1c1e" stroke-width="3.3" stroke-linecap="round" stroke-linejoin="round"/><path d="M3247.2 1677.5 L3250 1700.3 A5.6 5.6 0 0 0 3255.6 1705.7 H3264.6 A5.6 5.6 0 0 0 3270.2 1700.3 L3273 1677.5" fill="none" stroke="#1e1c1e" stroke-width="3.3" stroke-linecap="round" stroke-linejoin="round"/></svg>
<svg style="left:1122px;top:1769px" width="24" height="36" viewBox="1122 1769 24 36" ><circle cx="1128.1" cy="1774.8" r="4.1" fill="#1e1c1e"/><circle cx="1128.1" cy="1786.8" r="4.1" fill="#1e1c1e"/><circle cx="1128.1" cy="1798.8" r="4.1" fill="#1e1c1e"/><circle cx="1140.2" cy="1774.8" r="4.1" fill="#1e1c1e"/><circle cx="1140.2" cy="1786.8" r="4.1" fill="#1e1c1e"/><circle cx="1140.2" cy="1798.8" r="4.1" fill="#1e1c1e"/></svg>
<span class="t" style="left:1209.00px;top:1776.90px;font-size:28px;line-height:28px;font-weight:400;color:#1e1c1e;letter-spacing:0.379px;transform:scaleX(1.1);-webkit-text-stroke:0.2px #1e1c1e;">marc category</span>
<div class="abs" style="left:1424px;top:1769px;width:66px;height:48px;border-radius:24px;background:#e2e2e2"></div>
<svg style="left:1439px;top:1775px" width="36" height="36" viewBox="1439 1775 36 36" ><path d="M1451.40 1784.40 L1467.40 1800.40" fill="none" stroke="#f4f4f4" stroke-width="1.3"/><path d="M1454.60 1782.60 C1455.50 1781.70 1457.00 1781.40 1458.00 1781.50 C1463.00 1782.00 1467.60 1785.50 1471.00 1790.80 C1471.90 1792.30 1471.70 1794.00 1470.80 1795.20 L1469.90 1796.50 C1469.60 1797.40 1468.80 1797.40 1468.20 1796.80 L1454.60 1783.40 C1454.30 1783.10 1454.30 1782.90 1454.60 1782.60 Z" fill="none" stroke="#0c0b0c" stroke-width="2.65" stroke-linecap="round" stroke-linejoin="round"/><path d="M1448.20 1784.20 L1443.30 1790.80 C1442.40 1792.00 1442.40 1793.00 1443.20 1794.10 C1446.50 1798.80 1451.50 1803.20 1457.30 1803.20 C1460.40 1803.20 1462.80 1802.20 1465.00 1801.00" fill="none" stroke="#0c0b0c" stroke-width="2.65" stroke-linecap="round" stroke-linejoin="round"/><path d="M1453.50 1789.50 A4.9 4.9 0 0 0 1460.40 1796.40" fill="none" stroke="#0c0b0c" stroke-width="2.65" stroke-linecap="round" stroke-linejoin="round"/><path d="M1442.40 1778.20 L1471.60 1807.75" fill="none" stroke="#0c0b0c" stroke-width="2.65" stroke-linecap="round" stroke-linejoin="round"/></svg>
<span class="t" style="left:2043.00px;top:1780.10px;font-size:28px;line-height:28px;font-weight:400;color:#1e1c1e;letter-spacing:0.227px;transform:scaleX(1.1);-webkit-text-stroke:0.2px #1e1c1e;">this is marc category</span>
<span class="t" style="left:2847.00px;top:1780.10px;font-size:28px;line-height:28px;font-weight:400;color:#1e1c1e;letter-spacing:0.000px;transform:scaleX(1.06);-webkit-text-stroke:0.2px #1e1c1e;">8</span>
<svg style="left:3092px;top:1771px" width="48" height="44" viewBox="3092 1771 48 44" ><path d="M3100.5 1800.6 A14.5 14.5 0 1 1 3124.4 1786.6 A9.3 9.3 0 0 1 3131.4 1803.6" fill="none" stroke="#1e1c1e" stroke-width="3.3" stroke-linecap="round" stroke-linejoin="round"/><path d="M3108.9 1801.2 L3114.9 1807.1 L3124.8 1797.6" fill="none" stroke="#1e1c1e" stroke-width="3.2" stroke-linecap="butt" stroke-linejoin="miter"/></svg>
<svg style="left:3165.4px;top:1769.6px" width="44.64" height="44.64" viewBox="0 0 24 24"><path d="M3 17.25V21h3.75L17.81 9.94l-3.75-3.75L3 17.25zM20.71 7.04c.39-.39.39-1.02 0-1.41l-2.34-2.34c-.39-.39-1.02-.39-1.41 0l-1.83 1.83 3.75 3.75 1.83-1.83z" fill="#1e1c1e"/></svg>
<svg style="left:3240px;top:1769px" width="42" height="46" viewBox="3240 1769 42 46" ><path d="M3244 1780.4 H3276.7" fill="none" stroke="#1e1c1e" stroke-width="3.3" stroke-linecap="round" stroke-linejoin="round"/><path d="M3255.6 1780 V1778.6 A4.6 4.1 0 0 1 3264.8 1778.6 V1780" fill="none" stroke="#1e1c1e" stroke-width="3.3" stroke-linecap="round" stroke-linejoin="round"/><path d="M3247.2 1781.5 L3250 1804.3 A5.6 5.6 0 0 0 3255.6 1809.7 H3264.6 A5.6 5.6 0 0 0 3270.2 1804.3 L3273 1781.5" fill="none" stroke="#1e1c1e" stroke-width="3.3" stroke-linecap="round" stroke-linejoin="round"/></svg>
<svg style="left:1122px;top:1873px" width="24" height="36" viewBox="1122 1873 24 36" ><circle cx="1128.1" cy="1878.8" r="4.1" fill="#1e1c1e"/><circle cx="1128.1" cy="1890.8" r="4.1" fill="#1e1c1e"/><circle cx="1128.1" cy="1902.8" r="4.1" fill="#1e1c1e"/><circle cx="1140.2" cy="1878.8" r="4.1" fill="#1e1c1e"/><circle cx="1140.2" cy="1890.8" r="4.1" fill="#1e1c1e"/><circle cx="1140.2" cy="1902.8" r="4.1" fill="#1e1c1e"/></svg>
<span class="t" style="left:1209.00px;top:1880.90px;font-size:28px;line-height:28px;font-weight:400;color:#1e1c1e;letter-spacing:0.024px;transform:scaleX(1.0464);-webkit-text-stroke:0.2px #1e1c1e;">NKAPICategoryTEST</span>
<div class="abs" style="left:1504px;top:1873px;width:66px;height:48px;border-radius:24px;background:#e2e2e2"></div>
<svg style="left:1519px;top:1879px" width="36" height="36" viewBox="1519 1879 36 36" ><path d="M1531.40 1888.40 L1547.40 1904.40" fill="none" stroke="#f4f4f4" stroke-width="1.3"/><path d="M1534.60 1886.60 C1535.50 1885.70 1537.00 1885.40 1538.00 1885.50 C1543.00 1886.00 1547.60 1889.50 1551.00 1894.80 C1551.90 1896.30 1551.70 1898.00 1550.80 1899.20 L1549.90 1900.50 C1549.60 1901.40 1548.80 1901.40 1548.20 1900.80 L1534.60 1887.40 C1534.30 1887.10 1534.30 1886.90 1534.60 1886.60 Z" fill="none" stroke="#0c0b0c" stroke-width="2.65" stroke-linecap="round" stroke-linejoin="round"/><path d="M1528.20 1888.20 L1523.30 1894.80 C1522.40 1896.00 1522.40 1897.00 1523.20 1898.10 C1526.50 1902.80 1531.50 1907.20 1537.30 1907.20 C1540.40 1907.20 1542.80 1906.20 1545.00 1905.00" fill="none" stroke="#0c0b0c" stroke-width="2.65" stroke-linecap="round" stroke-linejoin="round"/><path d="M1533.50 1893.50 A4.9 4.9 0 0 0 1540.40 1900.40" fill="none" stroke="#0c0b0c" stroke-width="2.65" stroke-linecap="round" stroke-linejoin="round"/><path d="M1522.40 1882.20 L1551.60 1911.75" fill="none" stroke="#0c0b0c" stroke-width="2.65" stroke-linecap="round" stroke-linejoin="round"/></svg>
<span class="t" style="left:2041.00px;top:1884.10px;font-size:28px;line-height:28px;font-weight:400;color:#1e1c1e;letter-spacing:-0.044px;transform:scaleX(1.0494);-webkit-text-stroke:0.2px #1e1c1e;">NKAPICategoryTES</span>
<span class="t" style="left:2846.00px;top:1884.10px;font-size:28px;line-height:28px;font-weight:400;color:#1e1c1e;letter-spacing:0.000px;transform:scaleX(1.06);-webkit-text-stroke:0.2px #1e1c1e;">18</span>
<svg style="left:3092px;top:1875px" width="48" height="44" viewBox="3092 1875 48 44" ><path d="M3100.5 1904.6 A14.5 14.5 0 1 1 3124.4 1890.6 A9.3 9.3 0 0 1 3131.4 1907.6" fill="none" stroke="#1e1c1e" stroke-width="3.3" stroke-linecap="round" stroke-linejoin="round"/><path d="M3108.9 1905.2 L3114.9 1911.1 L3124.8 1901.6" fill="none" stroke="#1e1c1e" stroke-width="3.2" stroke-linecap="butt" stroke-linejoin="miter"/></svg>
<svg style="left:3165.4px;top:1873.6px" width="44.64" height="44.64" viewBox="0 0 24 24"><path d="M3 17.25V21h3.75L17.81 9.94l-3.75-3.75L3 17.25zM20.71 7.04c.39-.39.39-1.02 0-1.41l-2.34-2.34c-.39-.39-1.02-.39-1.41 0l-1.83 1.83 3.75 3.75 1.83-1.83z" fill="#1e1c1e"/></svg>
<svg style="left:3240px;top:1873px" width="42" height="46" viewBox="3240 1873 42 46" ><path d="M3244 1884.4 H3276.7" fill="none" stroke="#1e1c1e" stroke-width="3.3" stroke-linecap="round" stroke-linejoin="round"/><path d="M3255.6 1884 V1882.6 A4.6 4.1 0 0 1 3264.8 1882.6 V1884" fill="none" stroke="#1e1c1e" stroke-width="3.3" stroke-linecap="round" stroke-linejoin="round"/><path d="M3247.2 1885.5 L3250 1908.3 A5.6 5.6 0 0 0 3255.6 1913.7 H3264.6 A5.6 5.6 0 0 0 3270.2 1908.3 L3273 1885.5" fill="none" stroke="#1e1c1e" stroke-width="3.3" stroke-linecap="round" stroke-linejoin="round"/></svg>
<svg style="left:1122px;top:1977px" width="24" height="36" viewBox="1122 1977 24 36" ><circle cx="1128.1" cy="1982.8" r="4.1" fill="#1e1c1e"/><circle cx="1128.1" cy="1994.8" r="4.1" fill="#1e1c1e"/><circle cx="1128.1" cy="2006.8" r="4.1" fill="#1e1c1e"/><circle cx="1140.2" cy="1982.8" r="4.1" fill="#1e1c1e"/><circle cx="1140.2" cy="1994.8" r="4.1" fill="#1e1c1e"/><circle cx="1140.2" cy="2006.8" r="4.1" fill="#1e1c1e"/></svg>
<div class="abs" style="left:1445px;top:1977px;width:66px;height:48px;border-radius:24px;background:#e2e2e2"></div>
<svg style="left:1460px;top:1983px" width="36" height="36" viewBox="1460 1983 36 36" ><path d="M1472.40 1992.40 L1488.40 2008.40" fill="none" stroke="#f4f4f4" stroke-width="1.3"/><path d="M1475.60 1990.60 C1476.50 1989.70 1478.00 1989.40 1479.00 1989.50 C1484.00 1990.00 1488.60 1993.50 1492.00 1998.80 C1492.90 2000.30 1492.70 2002.00 1491.80 2003.20 L1490.90 2004.50 C1490.60 2005.40 1489.80 2005.40 1489.20 2004.80 L1475.60 1991.40 C1475.30 1991.10 1475.30 1990.90 1475.60 1990.60 Z" fill="none" stroke="#0c0b0c" stroke-width="2.65" stroke-linecap="round" stroke-linejoin="round"/><path d="M1469.20 1992.20 L1464.30 1998.80 C1463.40 2000.00 1463.40 2001.00 1464.20 2002.10 C1467.50 2006.80 1472.50 2011.20 1478.30 2011.20 C1481.40 2011.20 1483.80 2010.20 1486.00 2009.00" fill="none" stroke="#0c0b0c" stroke-width="2.65" stroke-linecap="round" stroke-linejoin="round"/><path d="M1474.50 1997.50 A4.9 4.9 0 0 0 1481.40 2004.40" fill="none" stroke="#0c0b0c" stroke-width="2.65" stroke-linecap="round" stroke-linejoin="round"/><path d="M1463.40 1986.20 L1492.60 2015.75" fill="none" stroke="#0c0b0c" stroke-width="2.65" stroke-linecap="round" stroke-linejoin="round"/></svg>
<svg style="left:3092px;top:1979px" width="48" height="44" viewBox="3092 1979 48 44" ><path d="M3100.5 2008.6 A14.5 14.5 0 1 1 3124.4 1994.6 A9.3 9.3 0 0 1 3131.4 2011.6" fill="none" stroke="#1e1c1e" stroke-width="3.3" stroke-linecap="round" stroke-linejoin="round"/><path d="M3108.9 2009.2 L3114.9 2015.1 L3124.8 2005.6" fill="none" stroke="#1e1c1e" stroke-width="3.2" stroke-linecap="butt" stroke-linejoin="miter"/></svg>
<svg style="left:3165.4px;top:1977.6px" width="44.64" height="44.64" viewBox="0 0 24 24"><path d="M3 17.25V21h3.75L17.81 9.94l-3.75-3.75L3 17.25zM20.71 7.04c.39-.39.39-1.02 0-1.41l-2.34-2.34c-.39-.39-1.02-.39-1.41 0l-1.83 1.83 3.75 3.75 1.83-1.83z" fill="#1e1c1e"/></svg>
<svg style="left:3240px;top:1977px" width="42" height="46" viewBox="3240 1977 42 46" ><path d="M3244 1988.4 H3276.7" fill="none" stroke="#1e1c1e" stroke-width="3.3" stroke-linecap="round" stroke-linejoin="round"/><path d="M3255.6 1988 V1986.6 A4.6 4.1 0 0 1 3264.8 1986.6 V1988" fill="none" stroke="#1e1c1e" stroke-width="3.3" stroke-linecap="round" stroke-linejoin="round"/><path d="M3247.2 1989.5 L3250 2012.3 A5.6 5.6 0 0 0 3255.6 2017.7 H3264.6 A5.6 5.6 0 0 0 3270.2 2012.3 L3273 1989.5" fill="none" stroke="#1e1c1e" stroke-width="3.3" stroke-linecap="round" stroke-linejoin="round"/></svg>
</main>
<div class="abs" style="left:3426px;top:140px;width:30px;height:1844px;background:#fafafa;border-left:2px solid #e9e9e9;border-right:2px solid #ededed"></div>
<div class="abs" style="left:3434px;top:146px;width:16px;height:628px;border-radius:8px;background:#c1c1c1"></div>
</div>
<script>(function(){var w=window.innerWidth;if(w&&Math.abs(w-3456)>40){var k=w/3456,a=document.getElementById('app');a.style.zoom=k;var r=document.documentElement.style,b=document.body.style;r.width=b.width=Math.round(3456*k)+'px';r.height=b.height=Math.round(1984*k)+'px';}})();</script>
</body>
</html>
